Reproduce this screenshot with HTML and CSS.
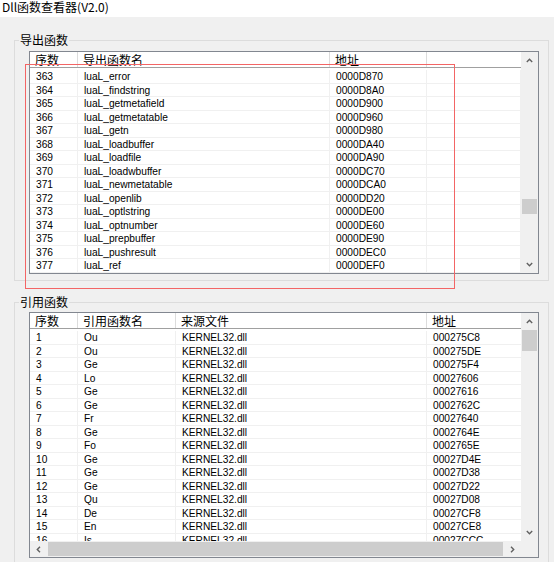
FILE: index.html
```html
<!DOCTYPE html>
<html lang="zh-CN">
<head>
    <meta charset="UTF-8">
    <title>Dll函数查看器(V2.0)</title>
    <link rel="stylesheet" href="styles.css">
</head>
<body>
    <div class="titlebar">Dll函数查看器(V2.0)</div>
    <div class="client">
        <fieldset class="group">
            <legend>导出函数</legend>
            <div class="listview export">
                <div class="lv-view">
                    <div class="lv-head">
                        <div>序数</div><div>导出函数名</div><div>地址</div><div></div>
                    </div>
                    <div class="lv-row"><div>363</div><div>luaL_error</div><div>0000D870</div><div></div></div>
                    <div class="lv-row"><div>364</div><div>luaL_findstring</div><div>0000D8A0</div><div></div></div>
                    <div class="lv-row"><div>365</div><div>luaL_getmetafield</div><div>0000D900</div><div></div></div>
                    <div class="lv-row"><div>366</div><div>luaL_getmetatable</div><div>0000D960</div><div></div></div>
                    <div class="lv-row"><div>367</div><div>luaL_getn</div><div>0000D980</div><div></div></div>
                    <div class="lv-row"><div>368</div><div>luaL_loadbuffer</div><div>0000DA40</div><div></div></div>
                    <div class="lv-row"><div>369</div><div>luaL_loadfile</div><div>0000DA90</div><div></div></div>
                    <div class="lv-row"><div>370</div><div>luaL_loadwbuffer</div><div>0000DC70</div><div></div></div>
                    <div class="lv-row"><div>371</div><div>luaL_newmetatable</div><div>0000DCA0</div><div></div></div>
                    <div class="lv-row"><div>372</div><div>luaL_openlib</div><div>0000DD20</div><div></div></div>
                    <div class="lv-row"><div>373</div><div>luaL_optlstring</div><div>0000DE00</div><div></div></div>
                    <div class="lv-row"><div>374</div><div>luaL_optnumber</div><div>0000DE60</div><div></div></div>
                    <div class="lv-row"><div>375</div><div>luaL_prepbuffer</div><div>0000DE90</div><div></div></div>
                    <div class="lv-row"><div>376</div><div>luaL_pushresult</div><div>0000DEC0</div><div></div></div>
                    <div class="lv-row"><div>377</div><div>luaL_ref</div><div>0000DEF0</div><div></div></div>
                </div>
                <div class="vscroll">
                    <div class="sb-btn"><svg width="7" height="5"><path d="M0.8 4 L3.5 1.3 L6.2 4" stroke="#606060" stroke-width="1.4" fill="none"/></svg></div>
                    <div class="sb-track"><div class="sb-thumb thumb-export"></div></div>
                    <div class="sb-btn"><svg width="7" height="5"><path d="M0.8 1 L3.5 3.7 L6.2 1" stroke="#606060" stroke-width="1.4" fill="none"/></svg></div>
                </div>
            </div>
        </fieldset>

        <fieldset class="group group-import">
            <legend>引用函数</legend>
            <div class="listview import">
                <div class="lv-view">
                    <div class="lv-head">
                        <div>序数</div><div>引用函数名</div><div>来源文件</div><div>地址</div>
                    </div>
                    <div class="lv-row"><div>1</div><div>Ou</div><div>KERNEL32.dll</div><div>000275C8</div></div>
                    <div class="lv-row"><div>2</div><div>Ou</div><div>KERNEL32.dll</div><div>000275DE</div></div>
                    <div class="lv-row"><div>3</div><div>Ge</div><div>KERNEL32.dll</div><div>000275F4</div></div>
                    <div class="lv-row"><div>4</div><div>Lo</div><div>KERNEL32.dll</div><div>00027606</div></div>
                    <div class="lv-row"><div>5</div><div>Ge</div><div>KERNEL32.dll</div><div>00027616</div></div>
                    <div class="lv-row"><div>6</div><div>Ge</div><div>KERNEL32.dll</div><div>0002762C</div></div>
                    <div class="lv-row"><div>7</div><div>Fr</div><div>KERNEL32.dll</div><div>00027640</div></div>
                    <div class="lv-row"><div>8</div><div>Ge</div><div>KERNEL32.dll</div><div>0002764E</div></div>
                    <div class="lv-row"><div>9</div><div>Fo</div><div>KERNEL32.dll</div><div>0002765E</div></div>
                    <div class="lv-row"><div>10</div><div>Ge</div><div>KERNEL32.dll</div><div>00027D4E</div></div>
                    <div class="lv-row"><div>11</div><div>Ge</div><div>KERNEL32.dll</div><div>00027D38</div></div>
                    <div class="lv-row"><div>12</div><div>Ge</div><div>KERNEL32.dll</div><div>00027D22</div></div>
                    <div class="lv-row"><div>13</div><div>Qu</div><div>KERNEL32.dll</div><div>00027D08</div></div>
                    <div class="lv-row"><div>14</div><div>De</div><div>KERNEL32.dll</div><div>00027CF8</div></div>
                    <div class="lv-row"><div>15</div><div>En</div><div>KERNEL32.dll</div><div>00027CE8</div></div>
                    <div class="lv-row"><div>16</div><div>Is</div><div>KERNEL32.dll</div><div>00027CCC</div></div>
                </div>
                <div class="vscroll">
                    <div class="sb-btn"><svg width="7" height="5"><path d="M0.8 4 L3.5 1.3 L6.2 4" stroke="#606060" stroke-width="1.4" fill="none"/></svg></div>
                    <div class="sb-track"><div class="sb-thumb thumb-import"></div></div>
                    <div class="sb-btn"><svg width="7" height="5"><path d="M0.8 1 L3.5 3.7 L6.2 1" stroke="#606060" stroke-width="1.4" fill="none"/></svg></div>
                </div>
                <div class="hscroll">
                    <div class="sb-btn"><svg width="5" height="7"><path d="M4 0.8 L1.3 3.5 L4 6.2" stroke="#606060" stroke-width="1.4" fill="none"/></svg></div>
                    <div class="sb-track"><div class="sb-thumb thumb-h"></div></div>
                    <div class="sb-btn"><svg width="5" height="7"><path d="M1 0.8 L3.7 3.5 L1 6.2" stroke="#606060" stroke-width="1.4" fill="none"/></svg></div>
                </div>
                <div class="sb-corner"></div>
            </div>
        </fieldset>
    </div>
    <div class="highlight"></div>
</body>
</html>
```

FILE: styles.css
```css
html, body {
    margin: 0;
    height: 562px;
    overflow: hidden;
}
body {
    position: relative;
    background: #f0f0f0;
    font-family: "Liberation Sans", "Noto Sans CJK SC", sans-serif;
    font-size: 10.2px;
    color: #000;
}
.titlebar {
    height: 17px;
    background: #fff;
    font-family: "Noto Sans CJK SC", sans-serif;
    font-size: 12px;
    line-height: 13px;
    padding-left: 2px;
}
.client {
    padding: 16px 0 0 14px;
}
.group {
    box-sizing: border-box;
    width: 535px;
    margin: 0;
    border: 1px solid #dcdcdc;
    padding: 4px 9px 6px 14px;
}
.group legend {
    margin-left: -10px;
    padding: 0 1px;
    font-family: "Noto Sans CJK SC", sans-serif;
    font-size: 12px;
    line-height: 14px;
}
.group-import {
    margin-top: 14px;
    padding-top: 3px;
}
.listview {
    box-sizing: border-box;
    border: 1px solid #828790;
    background: #fff;
    display: grid;
    grid-template-columns: 1fr 17px;
}
.listview.export {
    height: 223px;
}
.listview.import {
    height: 246px;
    grid-template-rows: 1fr 16px;
}
.lv-view {
    overflow: hidden;
    white-space: nowrap;
}
.lv-head, .lv-row {
    display: grid;
}
.export .lv-head, .export .lv-row {
    grid-template-columns: 48px 252px 97px 94px;
}
.import .lv-head, .import .lv-row {
    grid-template-columns: 48px 98px 251px 110px;
}
.lv-head {
    height: 16px;
    box-sizing: border-box;
    border-bottom: 1px solid #a0a0a0;
    margin-bottom: 2px;
    font-family: "Noto Sans CJK SC", sans-serif;
    font-size: 12px;
    line-height: 15px;
}
.lv-head div {
    border-right: 1px solid #dcdcdc;
    padding-left: 5px;
    overflow: hidden;
}
.export .lv-head div:last-child {
    border-right: none;
}
.lv-row {
    height: 13.5px;
    line-height: 14px;
}
.lv-row div {
    box-sizing: border-box;
    border-right: 1px solid #f0f0f0;
    border-bottom: 1px solid #f0f0f0;
    padding-left: 6px;
    overflow: hidden;
}
.vscroll {
    display: flex;
    flex-direction: column;
    background: #f0f0f0;
}
.hscroll {
    display: flex;
    background: #f0f0f0;
}
.sb-btn {
    flex: 0 0 17px;
    display: flex;
    align-items: center;
    justify-content: center;
}
.sb-track {
    flex: 1;
}
.sb-thumb {
    background: #cdcdcd;
}
.thumb-export {
    margin: 130px 1px 0;
    height: 15px;
}
.thumb-import {
    margin: 0 1px;
    height: 21px;
}
.thumb-h {
    margin: 1px 0 0 1px;
    height: 14px;
    width: 455px;
}
.sb-corner {
    background: #f0f0f0;
}
.highlight {
    position: absolute;
    left: 25px;
    top: 64px;
    width: 430px;
    height: 225px;
    box-sizing: border-box;
    border: 1px solid #f36565;
    pointer-events: none;
}
```
